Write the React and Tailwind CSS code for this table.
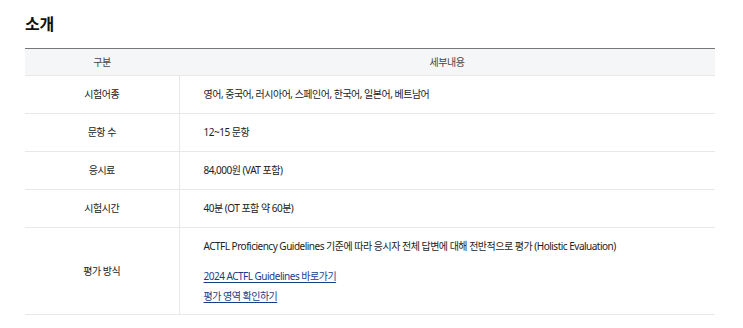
const ROWS = [
  { label: "시험어종", value: "영어, 중국어, 러시아어, 스페인어, 한국어, 일본어, 베트남어" },
  { label: "문항 수", value: "12~15 문항" },
  { label: "응시료", value: "84,000원 (VAT 포함)" },
  { label: "시험시간", value: "40분 (OT 포함 약 60분)" },
];

export default function App() {
  return (
    <div className="min-h-screen bg-white font-['Noto_Sans','Noto_Sans_CJK_KR',sans-serif] text-[#222]">
      <section className="pl-[25px] pr-[28px] pt-[12px]">
        <h2 className="text-[16px] font-bold leading-[24px] text-[#111] tracking-[-0.3px]">소개</h2>

        <table className="mt-[12px] w-full border-collapse border-t border-[#777] text-[10px] tracking-[-0.5px]">
          <thead>
            <tr className="bg-[#f5f6f8] border-b border-[#e8e8e8]">
              <th className="w-[154px] h-[27px] font-normal text-[#444]">구분</th>
              <th className="h-[27px] font-normal text-[#444]">세부내용</th>
            </tr>
          </thead>
          <tbody>
            {ROWS.map((row) => (
              <tr key={row.label} className="border-b border-[#e8e8e8]">
                <td className="h-[38px] text-center border-r border-[#e8e8e8]">{row.label}</td>
                <td className="h-[38px] pl-[24px] text-left">{row.value}</td>
              </tr>
            ))}
            <tr className="border-b border-[#e8e8e8]">
              <td className="text-center border-r border-[#e8e8e8]">평가 방식</td>
              <td className="pl-[24px] py-[8px] text-left leading-[20px]">
                <p className="mb-[10px]">
                  ACTFL Proficiency Guidelines 기준에 따라 응시자 전체 답변에 대해 전반적으로 평가 (Holistic Evaluation)
                </p>
                <a href="#" className="block text-[#1a3a8a] underline underline-offset-2">
                  2024 ACTFL Guidelines 바로가기
                </a>
                <a href="#" className="block text-[#1a3a8a] underline underline-offset-2">
                  평가 영역 확인하기
                </a>
              </td>
            </tr>
          </tbody>
        </table>
      </section>
    </div>
  );
}
